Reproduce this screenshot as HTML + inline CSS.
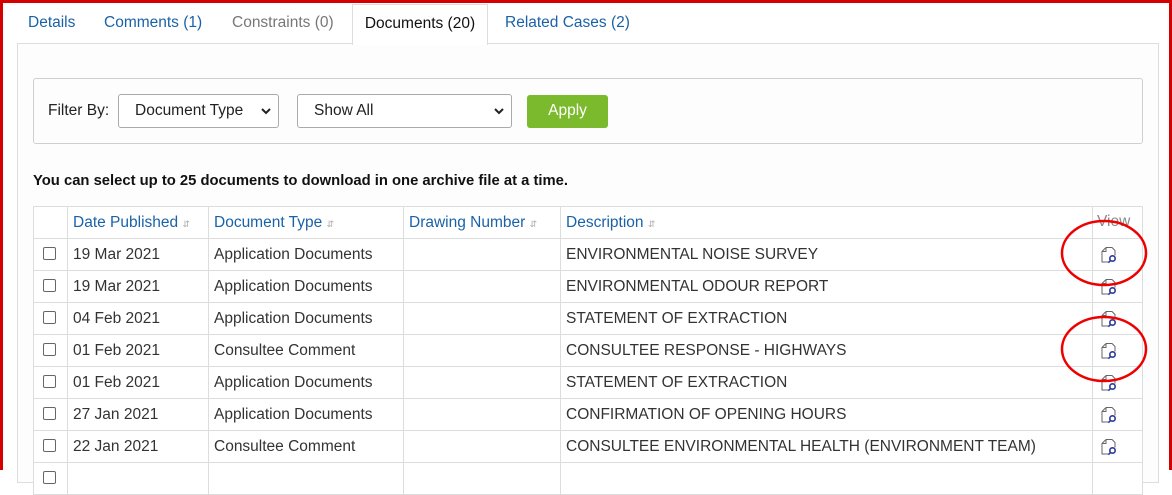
<!DOCTYPE html>
<html><head><style>
*{box-sizing:border-box;margin:0;padding:0}
body{width:1172px;height:470px;overflow:hidden;background:#fff;font-family:"Liberation Sans",sans-serif;font-size:15.5px;color:#333;position:relative}
.frame{position:absolute;left:0;top:0;width:1172px;height:470px;border:3px solid #d40000;border-bottom:none;z-index:5;pointer-events:none}
.tab{position:absolute;top:14px;color:#1a62a8}
.act{position:absolute;left:352px;top:4px;width:136px;height:41px;border:1px solid #ddd;border-bottom:none;background:#fff;color:#111;text-align:center;padding-top:10px;z-index:2;font-size:15.5px}
.panel{position:absolute;left:17px;top:43px;width:1142px;height:440px;border:1px solid #ddd;background:#fdfdfd}
.filter{position:absolute;left:33px;top:78px;width:1110px;height:66px;border:1px solid #ccd0d4;border-radius:3px;background:#fdfdfd}
.sel{position:absolute;top:94px;height:34px;border:1px solid #aaa;border-radius:3px;background:#fff;padding:7px 16px;font-size:15.5px;color:#222}
.sel svg{position:absolute;right:7px;top:13px}
.apply{position:absolute;left:527px;top:95px;width:81px;height:33px;background:#7bba2c;border-radius:3px;color:#fff;text-align:center;padding-top:7px}
.note{position:absolute;left:33px;top:173px;font-weight:bold;font-size:14.8px;color:#111}
table{position:absolute;left:33px;top:206px;border-collapse:collapse;background:#fff;font-size:15.5px;table-layout:fixed}
td,th{border:1px solid #ddd;height:32px;padding:0 5px;text-align:left;font-weight:normal;white-space:nowrap;vertical-align:middle;overflow:hidden}
th{color:#1a62a8}
th span{color:#aaa;font-size:9px}
.cb{display:inline-block;width:13px;height:13px;border:1px solid #666;border-radius:2px;vertical-align:middle;margin-left:4px;margin-top:-2px}
svg.ic{display:block;margin-left:2px}
</style></head><body>
<div class="frame"></div>
<div class="panel"></div>
<div class="tab" style="left:28px">Details</div>
<div class="tab" style="left:104px">Comments (1)</div>
<div class="tab" style="left:232px;color:#777">Constraints (0)</div>
<div class="act">Documents (20)</div>
<div class="tab" style="left:505px">Related Cases (2)</div>
<div class="filter"></div>
<div style="position:absolute;left:48px;top:102px;color:#222">Filter By:</div>
<div class="sel" style="left:118px;width:161px">Document Type<svg width="10" height="7" viewBox="0 0 10 7"><path d="M1 1l4 4 4-4" fill="none" stroke="#222" stroke-width="2"/></svg></div>
<div class="sel" style="left:297px;width:215px">Show All<svg width="10" height="7" viewBox="0 0 10 7"><path d="M1 1l4 4 4-4" fill="none" stroke="#222" stroke-width="2"/></svg></div>
<div class="apply">Apply</div>
<div class="note">You can select up to 25 documents to download in one archive file at a time.</div>
<table>
<colgroup><col style="width:34px"><col style="width:141px"><col style="width:195px"><col style="width:157px"><col style="width:532px"><col style="width:50px"></colgroup>
<tr><th></th><th>Date Published <span>&#8693;</span></th><th>Document Type <span>&#8693;</span></th><th>Drawing Number <span>&#8693;</span></th><th>Description <span>&#8693;</span></th><th style="color:#888;vertical-align:top;padding-top:6px;padding-left:4px">View</th></tr>
<tr><td><span class="cb"></span></td><td>19 Mar 2021</td><td>Application Documents</td><td></td><td>ENVIRONMENTAL NOISE SURVEY</td><td>ICON</td></tr>
<tr><td><span class="cb"></span></td><td>19 Mar 2021</td><td>Application Documents</td><td></td><td>ENVIRONMENTAL ODOUR REPORT</td><td>ICON</td></tr>
<tr><td><span class="cb"></span></td><td>04 Feb 2021</td><td>Application Documents</td><td></td><td>STATEMENT OF EXTRACTION</td><td>ICON</td></tr>
<tr><td><span class="cb"></span></td><td>01 Feb 2021</td><td>Consultee Comment</td><td></td><td>CONSULTEE RESPONSE - HIGHWAYS</td><td>ICON</td></tr>
<tr><td><span class="cb"></span></td><td>01 Feb 2021</td><td>Application Documents</td><td></td><td>STATEMENT OF EXTRACTION</td><td>ICON</td></tr>
<tr><td><span class="cb"></span></td><td>27 Jan 2021</td><td>Application Documents</td><td></td><td>CONFIRMATION OF OPENING HOURS</td><td>ICON</td></tr>
<tr><td><span class="cb"></span></td><td>22 Jan 2021</td><td>Consultee Comment</td><td></td><td>CONSULTEE ENVIRONMENTAL HEALTH (ENVIRONMENT TEAM)</td><td>ICON</td></tr>
<tr><td><span class="cb"></span></td><td></td><td></td><td></td><td></td><td></td></tr>
</table>
<svg style="position:absolute;left:0;top:0;z-index:6" width="1172" height="470">
<ellipse cx="1104" cy="253" rx="42" ry="32" fill="none" stroke="#e00" stroke-width="2.5"/>
<ellipse cx="1104" cy="349" rx="42" ry="32" fill="none" stroke="#e00" stroke-width="2.5"/>
</svg>
<script>
var ic='<svg class="ic" width="18" height="18" viewBox="0 0 18 18"><path d="M6 1.5h6l3 3v5M6 1.5l-4 4v10.5h6M2 5.5h4v-4" fill="none" stroke="#666" stroke-width="1"/><circle cx="12.5" cy="12.5" r="2.7" fill="none" stroke="#2b3a9a" stroke-width="1.6"/><path d="M10.5 14.5l-2.2 2.2" stroke="#2b3a9a" stroke-width="1.6"/></svg>';
document.querySelectorAll('td').forEach(function(t){if(t.textContent=='ICON')t.innerHTML=ic;});
</script>
</body></html>
